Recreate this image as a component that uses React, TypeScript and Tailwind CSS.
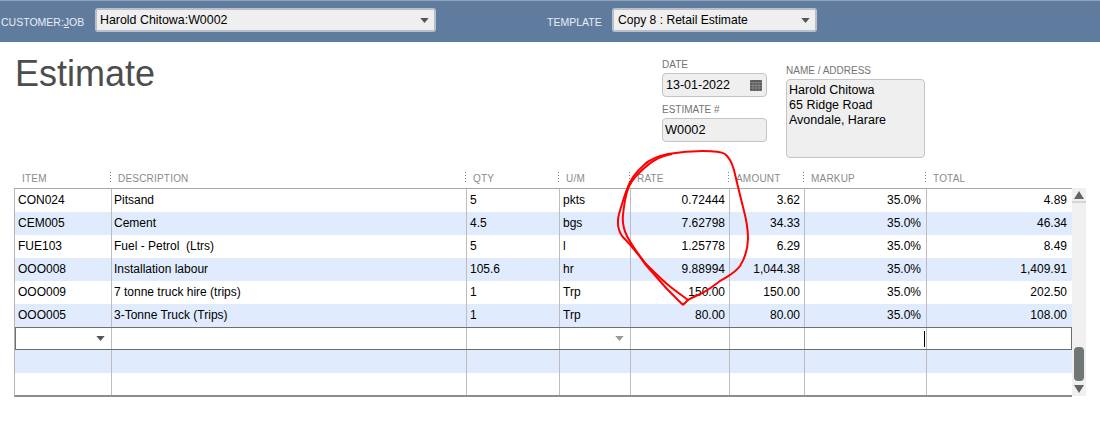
import { ReactNode } from "react";

const font = { fontFamily: '"Liberation Sans", Arial, sans-serif' };

const columns = [
    { label: "ITEM", width: "w-[97px]", align: "text-left" },
    { label: "DESCRIPTION", width: "w-[355px]", align: "text-left" },
    { label: "QTY", width: "w-[93px]", align: "text-left" },
    { label: "U/M", width: "w-[71px]", align: "text-left" },
    { label: "RATE", width: "w-[99px]", align: "text-right" },
    { label: "AMOUNT", width: "w-[75px]", align: "text-right" },
    { label: "MARKUP", width: "w-[122px]", align: "text-right" },
    { label: "TOTAL", width: "w-[144px]", align: "text-right" },
];

const rows = [
    ["CON024", "Pitsand", "5", "pkts", "0.72444", "3.62", "35.0%", "4.89"],
    ["CEM005", "Cement", "4.5", "bgs", "7.62798", "34.33", "35.0%", "46.34"],
    ["FUE103", "Fuel - Petrol  (Ltrs)", "5", "l", "1.25778", "6.29", "35.0%", "8.49"],
    ["OOO008", "Installation labour", "105.6", "hr", "9.88994", "1,044.38", "35.0%", "1,409.91"],
    ["OOO009", "7 tonne truck hire (trips)", "1", "Trp", "150.00", "150.00", "35.0%", "202.50"],
    ["OOO005", "3-Tonne Truck (Trips)", "1", "Trp", "80.00", "80.00", "35.0%", "108.00"],
];

const Caret = ({ className }: { className: string }) => (
    <svg width="9" height="5" viewBox="0 0 10 6" className={className}>
        <path d="M0 0h10L5 6z" fill="currentColor" />
    </svg>
);

const Select = ({ value, className }: { value: string; className: string }) => (
    <div className={`flex h-[24px] items-center justify-between rounded-[3px] border-2 border-[#b9c0c9] bg-[#efefef] pr-[5px] ${className}`}>
        <span className="text-black">{value}</span>
        <Caret className="text-[#555]" />
    </div>
);

const Field = ({ label, children, className }: { label: string; children: ReactNode; className: string }) => (
    <div className="flex flex-col">
        <span className="mb-[2px] text-[10px] leading-[12px] text-[#737373]">{label}</span>
        <div className={`rounded-[4px] border border-[#c4c4c4] bg-[#efefef] text-black ${className}`}>
            {children}
        </div>
    </div>
);

const CalendarIcon = () => (
    <svg width="12" height="11" viewBox="0 0 12 11">
        <rect width="12" height="11" rx="1" fill="#5c5c5c" />
        <path d="M0 2.5h12M3 3v8M6 3v8M9 3v8M0 5.5h12M0 8h12" stroke="#999" strokeWidth="0.6" />
    </svg>
);

const Scribble = () => (
    <svg className="pointer-events-none absolute top-0 left-0" width="1100" height="432" viewBox="0 0 1100 432" fill="none">
        <path
            d="M683 305L667 289C660 281 653 273 645 264C637 252 628 242 622 236C618 230 617 222 619 214C622 204 624 197 627 189C630 180 636 172 644 165C650 159 658 156 668 154C680 152 692 151 703 151C712 151 720 151 725 154C730 158 732 163 734 170C737 183 740 195 743 207C746 218 748 228 748 238C748 250 745 258 740 266C734 274 728 276 720 281C712 287 706 292 698 295C693 297 690 299 688 300L683 305"
            stroke="#ff0000"
            strokeWidth="2"
            strokeLinejoin="round"
        />
        <path
            d="M688 300C680 294 674 290 667 284C660 278 652 270 646 264C638 254 632 246 627 236C624 230 622 224 623 215C624 205 625 197 628 189C631 181 634 178 638 174C644 168 650 162 657 159C662 156 667 155 672 154"
            stroke="#ff0000"
            strokeWidth="2"
        />
    </svg>
);

export default function App() {
    return (
        <div className="relative h-[432px] w-[1100px] overflow-hidden bg-white" style={font}>
            <div className="flex h-[42px] items-start border-t border-[#8fa3bc] bg-[#5f7c9f] pt-[7px]">
                <span className="mt-[8px] ml-[1px] w-[94px] text-[10.5px] leading-[12px] text-[#e8edf3]">
                    CUSTOMER:<span className="underline">J</span>OB
                </span>
                <Select value="Harold Chitowa:W0002" className="w-[341px] pl-[3px] text-[12.4px]" />
                <span className="mt-[8px] ml-[111px] w-[65px] text-[10.5px] leading-[12px] text-[#e8edf3]">TEMPLATE</span>
                <Select value="Copy 8 : Retail Estimate" className="w-[205px] pl-[4px] text-[12.1px]" />
            </div>

            <div className="flex h-[128px] items-start">
                <h1 className="mt-[8px] ml-[15px] w-[647px] text-[36px] leading-[48px] font-normal text-[#4d4d4d]">Estimate</h1>
                <div className="mt-[17px] flex w-[124px] flex-col gap-[7px]">
                    <Field label="DATE" className="flex h-[24px] w-[105px] items-center justify-between pr-[4px] pl-[3px] text-[12.5px]">
                        <span>13-01-2022</span>
                        <CalendarIcon />
                    </Field>
                    <Field label="ESTIMATE #" className="flex h-[24px] w-[105px] items-center pl-[2px] text-[12.8px]">
                        <span>W0002</span>
                    </Field>
                </div>
                <div className="mt-[23px]">
                    <Field label="NAME / ADDRESS" className="h-[79px] w-[139px] px-[2px] pt-[3px] text-[12.5px] leading-[15px]">
                        <div>Harold Chitowa</div>
                        <div>65 Ridge Road</div>
                        <div>Avondale, Harare</div>
                    </Field>
                </div>
            </div>

            <div className="ml-[15px] flex h-[18px] items-center">
                {columns.map((col, i) => (
                    <div key={col.label} className={`relative flex h-[18px] items-center pb-[2px] ${col.width} ${i === 0 ? "pl-[7px]" : "pl-[6px]"}`}>
                        {i > 0 && <span className="absolute top-[2px] left-[-2px] h-[11px] w-[1px] bg-[repeating-linear-gradient(#808080_0_1px,transparent_1px_3px)]" />}
                        <span className="text-[10px] tracking-[0.2px] text-[#8a8a8a]">{col.label}</span>
                    </div>
                ))}
            </div>

            <div className="flex items-start">
                <div className="ml-[14px] w-[1058px] border-t border-b-2 border-l border-t-[#a8a8a8] border-b-[#8c8c8c] border-l-[#b5b5b5]">
                    {rows.map((row, r) => (
                        <div key={row[0]} className={`flex h-[23px] ${r % 2 === 1 ? "bg-[#e0ecfd]" : "bg-white"}`}>
                            {row.map((cell, c) => (
                                <div
                                    key={c}
                                    className={`flex items-center overflow-hidden pb-[2px] text-[12px] whitespace-pre text-black ${c < 7 ? "border-r border-[#bdbdbd]" : ""} ${columns[c].width} ${c === 1 ? "px-[2px]" : "px-[3px]"} ${columns[c].align === "text-right" ? "justify-end" : ""} ${c === 6 ? "pr-[5px]" : columns[c].align === "text-right" ? "pr-[4px]" : ""}`}
                                >
                                    {cell}
                                </div>
                            ))}
                        </div>
                    ))}
                    {/* active row: outer border eats 1px each side, so first and last cells are narrower */}
                    <div className="flex h-[23px] border border-[#6e6e6e] bg-white">
                        {columns.map((col, c) => (
                            <div key={col.label} className={`relative flex items-center justify-end pr-[6px] ${c < 7 ? "border-r border-[#bdbdbd]" : ""} ${c === 0 ? "w-[96px]" : c === 7 ? "w-[143px]" : col.width}`}>
                                {c === 0 && <Caret className="text-[#555]" />}
                                {c === 3 && <Caret className="text-[#999]" />}
                                {c === 6 && <span className="absolute top-[3px] right-[1px] h-[16px] border-l border-black" />}
                            </div>
                        ))}
                    </div>
                    {[0, 1].map((r) => (
                        <div key={r} className={`flex ${r === 0 ? "h-[23px] bg-[#e0ecfd]" : "h-[22px] bg-white"}`}>
                            {columns.map((col, c) => (
                                <div key={col.label} className={`${c < 7 ? "border-r border-[#bdbdbd]" : ""} ${col.width}`} />
                            ))}
                        </div>
                    ))}
                </div>

                <div className="flex h-[208px] w-[14px] flex-col items-center bg-[#f0f0f0]">
                    <div className="flex h-[15px] w-full items-center justify-center border-b-2 border-[#d5d5d5]">
                        <svg width="10" height="8" viewBox="0 0 10 8"><path d="M5 0l5 8H0z" fill="#5f6665" /></svg>
                    </div>
                    <div className="flex-1" />
                    <div className="h-[34px] w-[10px] rounded-[4px] bg-[#6f7675]" />
                    <div className="flex h-[15px] w-full items-center justify-center">
                        <svg width="10" height="8" viewBox="0 0 10 8"><path d="M0 0h10L5 8z" fill="#5f6665" /></svg>
                    </div>
                </div>
            </div>

            <Scribble />
        </div>
    );
}
